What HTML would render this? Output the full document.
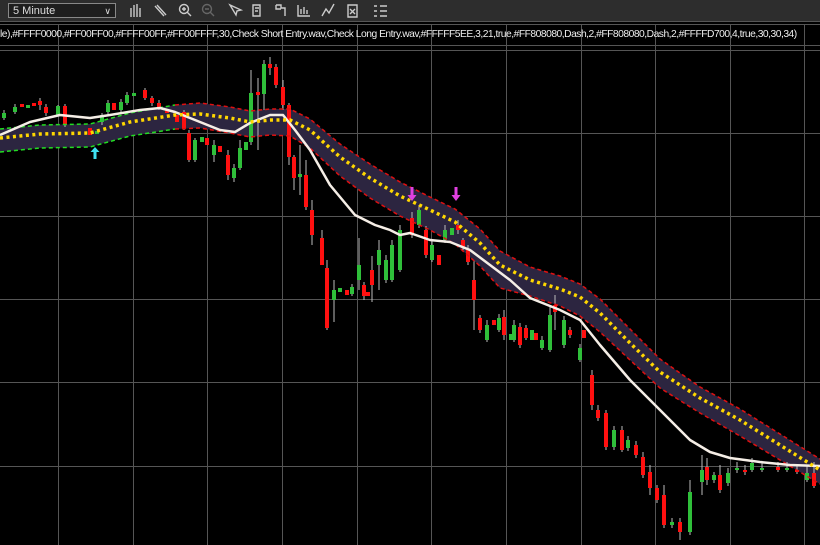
<!DOCTYPE html>
<html><head><meta charset="utf-8"><style>
html,body{margin:0;padding:0;background:#000;width:820px;height:545px;overflow:hidden;font-family:"Liberation Sans",sans-serif}
#tb{position:absolute;left:0;top:0;width:820px;height:21px;background:#2d2d2d;border-bottom:1px solid #555}
#sel{position:absolute;left:8px;top:3px;width:108px;height:15px;border:1px solid #888;background:#1e1e1e;color:#ddd;font-size:11px;line-height:14px;padding-left:4px;box-sizing:border-box}
#sel span{position:absolute;right:4px;top:0;font-size:9px}
#txt{position:absolute;left:0;top:25px;height:20px;width:820px;color:#eee;font-size:10.3px;line-height:20px;white-space:nowrap;letter-spacing:-0.5px}
svg{position:absolute;left:0;top:0}
</style></head><body>
<svg width="820" height="545">
<g stroke="#555" stroke-width="1">
<path d="M0 24.5H820M0 45.5H820"/>
<path d="M58.5 24V545M133.5 24V545M207.5 24V545M282.5 24V545M357.5 24V545M431.5 24V545M506.5 24V545M581.5 24V545M655.5 24V545M730.5 24V545M804.5 24V545"/>
<path d="M0 50.5H820M0 133.5H820M0 216.5H820M0 299.5H820M0 382.5H820M0 466.5H820"/>
</g>
<polygon fill="#2c2540" points="0,129 40,125 90,124 130,113 175,105 200,103 230,107 250,111 270,109 290,109 310,119 340,144 370,164 400,182 430,197 455,209 480,229 500,251 530,267 560,276 580,284 600,299 630,329 660,359 700,387 740,409 780,434 820,459 820,484 780,460 740,436 700,413 660,388 630,360 600,332 580,316 560,306 530,296 500,288 480,266 455,244 430,230 400,216 370,198 340,176 310,148 290,136 270,135 250,137 230,133 200,128 175,129 130,136 90,147 40,148 0,152"/>
<g stroke="#bbb" stroke-width="1">
<path d="M4 110V120M15 104V114M40 98V110M46 104V116M58 105V116M65 104V127M102 113V125M108 100V114M121 99V112M127 92V105M145 88V100M152 96V106M159 100V110M184 110V130M189 130V162M195 138V162M214 140V162M228 150V180M234 164V182M240 140V170M251 70V145M258 78V150M264 60V110M270 57V75M276 64V88M283 80V110M289 103V165M294 155V190M300 145V195M306 160V210M312 200V245M322 230V265M327 260V330M334 280V322M352 284V296M359 238V290M364 282V300M372 256V302M379 240V290M386 255V283M392 240V282M400 225V272M412 212V238M419 205V228M426 226V258M432 240V262M445 225V243M458 220V234M463 238V250M468 245V265M474 260V330M480 315V333M487 320V342M499 314V332M504 310V340M514 320V342M520 323V348M526 325V340M542 336V350M550 305V352M555 295V330M564 316V348M570 327V338M580 344V362M592 370V410M598 405V421M606 410V450M614 426V450M622 426V452M628 436V451M636 441V458M643 452V478M650 465V495M657 485V503M664 485V528M672 518V528M680 518V540M690 480V535M702 455V495M707 458V485M714 472V483M720 465V493M728 468V486M737 462V473M745 465V475M752 458V472M762 462V472M778 462V472M787 462V472M797 466V474M807 466V482M814 462V488"/>
</g>
<path fill="#ff1010" d="M20 104h4v3h-4zM32 103h4v3h-4zM38 101h4v4h-4zM44 107h4v6h-4zM63 106h4v19h-4zM88 128h4v7h-4zM112 103h4v7h-4zM143 90h4v8h-4zM150 98h4v5h-4zM157 103h4v5h-4zM165 110h4v3h-4zM175 115h4v7h-4zM182 112h4v16h-4zM187 133h4v27h-4zM205 138h4v7h-4zM218 146h4v6h-4zM226 155h4v20h-4zM256 92h4v3h-4zM268 64h4v4h-4zM274 67h4v18h-4zM281 87h4v18h-4zM287 105h4v52h-4zM292 157h4v21h-4zM304 175h4v32h-4zM310 210h4v25h-4zM320 238h4v27h-4zM325 268h4v60h-4zM345 290h4v5h-4zM362 285h4v11h-4zM366 292h4v4h-4zM370 270h4v15h-4zM410 218h4v17h-4zM424 230h4v25h-4zM437 255h4v10h-4zM456 225h4v5h-4zM461 240h4v8h-4zM466 250h4v12h-4zM472 280h4v20h-4zM478 318h4v12h-4zM492 320h4v5h-4zM502 317h4v18h-4zM518 327h4v18h-4zM524 328h4v10h-4zM534 333h4v7h-4zM553 305h4v7h-4zM568 330h4v5h-4zM582 330h4v8h-4zM590 375h4v30h-4zM596 410h4v8h-4zM604 413h4v34h-4zM620 430h4v20h-4zM634 445h4v10h-4zM641 457h4v18h-4zM648 472h4v16h-4zM655 488h4v12h-4zM662 495h4v30h-4zM678 522h4v10h-4zM705 467h4v13h-4zM718 475h4v15h-4zM743 470h4v2h-4zM776 467h4v3h-4zM795 470h4v2h-4zM812 473h4v13h-4z"/>
<path fill="#2fbf3a" d="M2 113h4v5h-4zM13 107h4v5h-4zM26 105h4v3h-4zM56 106h4v9h-4zM95 131h4v3h-4zM100 115h4v7h-4zM106 103h4v9h-4zM119 102h4v8h-4zM125 95h4v8h-4zM132 93h4v3h-4zM193 140h4v20h-4zM200 137h4v5h-4zM212 145h4v10h-4zM232 168h4v10h-4zM238 148h4v20h-4zM244 142h4v8h-4zM249 93h4v49h-4zM262 64h4v30h-4zM298 174h4v3h-4zM332 290h4v10h-4zM338 288h4v4h-4zM350 287h4v7h-4zM357 265h4v15h-4zM377 250h4v15h-4zM384 260h4v20h-4zM390 245h4v35h-4zM398 230h4v40h-4zM417 210h4v15h-4zM430 245h4v15h-4zM443 230h4v10h-4zM450 228h4v7h-4zM485 325h4v15h-4zM497 318h4v12h-4zM509 334h4v6h-4zM512 325h4v15h-4zM530 330h4v10h-4zM540 340h4v8h-4zM548 315h4v35h-4zM562 320h4v25h-4zM578 348h4v12h-4zM612 430h4v17h-4zM626 440h4v8h-4zM670 522h4v3h-4zM688 492h4v40h-4zM700 470h4v12h-4zM712 475h4v5h-4zM726 473h4v10h-4zM735 468h4v2h-4zM750 463h4v7h-4zM760 468h4v2h-4zM785 468h4v2h-4zM805 473h4v7h-4z"/>
<g fill="none" stroke-width="1.5" stroke-dasharray="4,3">
<polyline stroke="#22dd22" points="0,129 40,125 90,124 130,113 175,105"/>
<polyline stroke="#22dd22" points="0,152 40,148 90,147 130,136 175,129"/>
<polyline stroke="#e01010" points="175,105 200,103 230,107 250,111 270,109 290,109 310,119 340,144 370,164 400,182 430,197 455,209 480,229 500,251 530,267 560,276 580,284 600,299 630,329 660,359 700,387 740,409 780,434 820,459"/>
<polyline stroke="#e01010" points="175,129 200,128 230,133 250,137 270,135 290,136 310,148 340,176 370,198 400,216 430,230 455,244 480,266 500,288 530,296 560,306 580,316 600,332 630,360 660,388 700,413 740,436 780,460 820,484"/>
</g>
<polyline fill="none" stroke="#f5eee6" stroke-width="2.5" stroke-linejoin="round" points="0,135 30,122 60,115 90,118 110,115 140,110 160,108 175,112 200,122 220,130 235,132 250,123 270,115 283,115 295,130 310,150 330,185 355,215 375,225 390,230 400,235 410,233 430,240 450,242 470,250 490,265 510,280 530,298 560,310 580,320 600,345 630,380 660,410 690,440 710,452 730,458 760,462 790,465 820,466"/>
<polyline fill="none" stroke="#ffd700" stroke-width="3.5" stroke-dasharray="3,3.5" points="0,138 40,134 90,133 130,122 175,115 200,114 230,118 250,122 270,120 290,120 310,130 340,157 370,178 400,196 430,210 455,222 480,243 500,265 530,280 560,289 580,297 600,313 630,343 660,372 700,398 740,420 780,445 820,470"/>
<path d="M95 147l-4.5 5h3v7h3v-7h3z" fill="#3fe0f0"/>
<path d="M410.5 187h3v8h3l-4.5 6-4.5-6h3zM454.5 187h3v8h3l-4.5 6-4.5-6h3z" fill="#e040e0"/>
</svg>
<div id="tb"><div id="sel">5 Minute<span>&#x2228;</span></div>
<svg width="820" height="21">
<g stroke="#ccc" fill="none" stroke-width="1.4">
<path d="M131 8v9M134 5v12M137 4v13M140 8v9"/>
<path d="M155 6l9 10M157 5l9 10"/>
<circle cx="184" cy="9" r="4.5"/><path d="M187 12l4 4M182 9h4M184 7v4"/>
<g stroke="#666"><circle cx="207" cy="9" r="4.5"/><path d="M210 12l4 4M205 9h4"/></g>
<path d="M230 5l6 10 1-4 4-1z"/>
<path d="M253 5h7v11h-7zM255 8h4M255 11h3"/>
<path d="M276 5h5v3h4v8M276 5v4h5"/>
<path d="M298 5v11h12M301 9v5M304 7v7M307 10v4"/>
<path d="M322 16l4-7 3 4 5-9"/>
<path d="M348 5h9v12h-9zM350 9l5 5M355 9l-5 5"/>
<path d="M374 6h3M380 6h7M374 11h3M380 11h7M374 16h3M380 16h7"/>
</g></svg></div>
<div id="txt">le),#FFFF0000,#FF00FF00,#FFFF00FF,#FF00FFFF,30,Check Short Entry.wav,Check Long Entry.wav,#FFFFF5EE,3,21,true,#FF808080,Dash,2,#FF808080,Dash,2,#FFFFD700,4,true,30,30,34)</div>
</body></html>
